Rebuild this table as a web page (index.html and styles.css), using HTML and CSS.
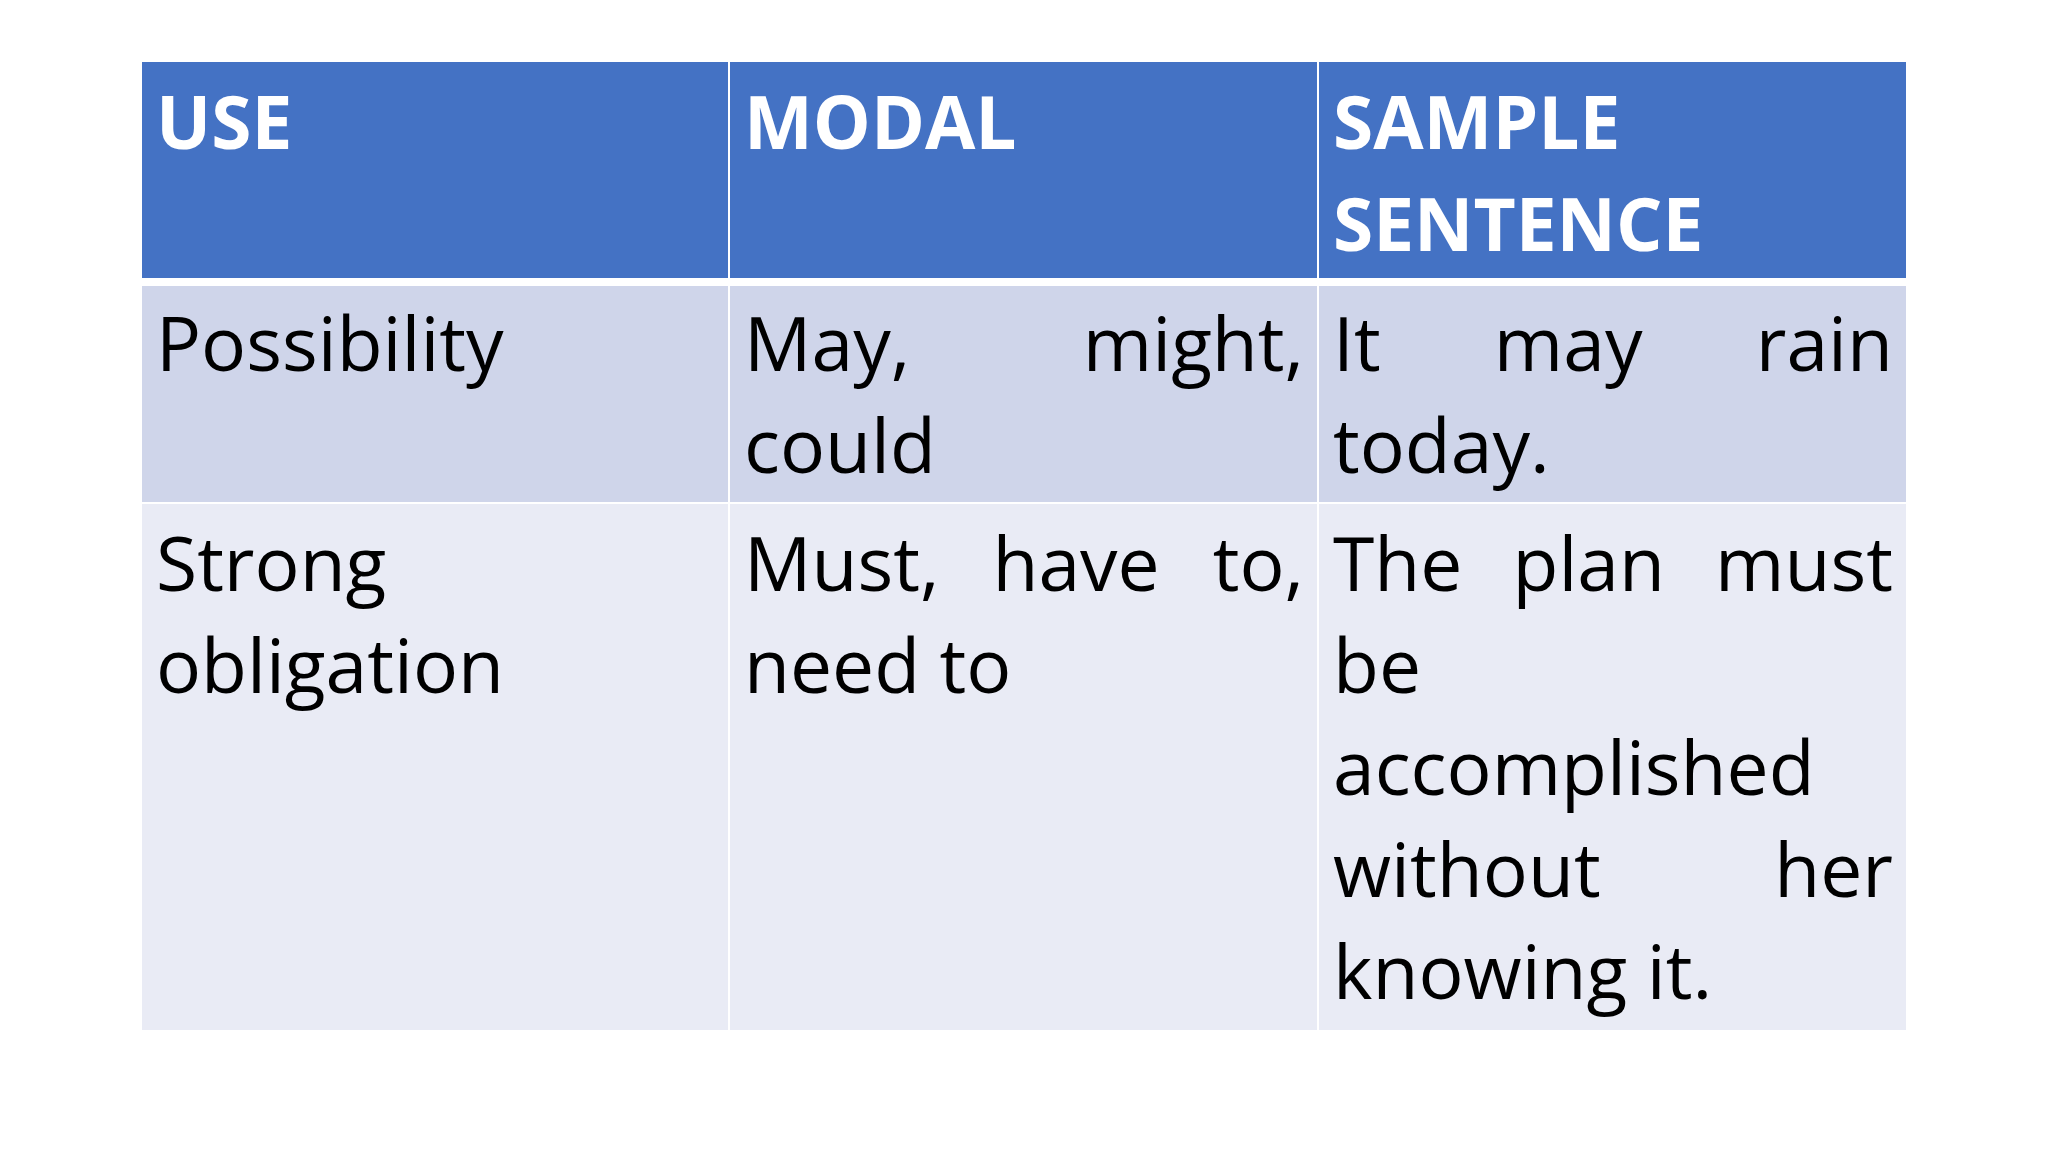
FILE: index.html
```html
<!DOCTYPE html>
<html lang="en">
<head>
<meta charset="utf-8">
<title>Modals</title>
<link rel="stylesheet" href="styles.css">
</head>
<body>
<div class="slide">
  <div class="table">
    <div class="cell head">USE</div>
    <div class="cell head">MODAL</div>
    <div class="cell head">SAMPLE SENTENCE</div>
    <div class="cell odd">Possibility</div>
    <div class="cell odd">May, might, could</div>
    <div class="cell odd">It may rain today.</div>
    <div class="cell even">Strong obligation</div>
    <div class="cell even">Must, have to, need to</div>
    <div class="cell even">The plan must be accomplished without her knowing it.</div>
  </div>
</div>
</body>
</html>
```

FILE: styles.css
```css
html, body {
  margin: 0;
  padding: 0;
  background: #ffffff;
}

.slide {
  width: 2048px;
  height: 1152px;
  box-sizing: border-box;
  padding: 62px 0 0 142px;
  font-family: "Open Sans", "Noto Sans", sans-serif;
}

.table {
  display: grid;
  grid-template-columns: 586px 587px 587px;
  grid-template-rows: 222px 216px 526px;
  column-gap: 2px;
  row-gap: 2px;
  width: 1764px;
}

.cell {
  box-sizing: border-box;
  padding: 5px 13px 0 14px;
  font-size: 75px;
  line-height: 102px;
  color: #000000;
  text-align: justify;
  overflow: hidden;
}

.head {
  background: #4472c4;
  color: #ffffff;
  font-weight: 700;
  font-size: 73px;
  text-align: left;
  padding-top: 8px;
  margin-bottom: 6px;
}

.odd {
  background: #cfd5ea;
}

.even {
  background: #e9ebf5;
  padding-top: 7px;
}
```
